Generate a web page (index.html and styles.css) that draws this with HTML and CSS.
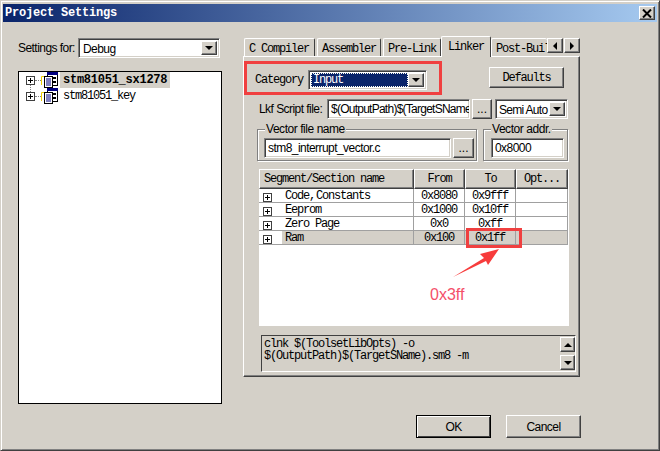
FILE: index.html
```
<!DOCTYPE html>
<html lang="en">
<head>
<meta charset="utf-8">
<title>Project Settings</title>
<link rel="stylesheet" href="styles.css">
</head>
<body>
<div class="window">
  <div class="titlebar">
    <span class="title">Project Settings</span>
    <span class="close raised"><svg width="10" height="9" viewBox="0 0 10 9"><path d="M1 0.5 L9 8.5 M9 0.5 L1 8.5" stroke="#000" stroke-width="2" fill="none"/></svg></span>
  </div>
  <div class="content">
    <div class="left">
      <div class="settings-row">
        <span class="label settings-label">Settings for:</span>
        <div class="combo settings-combo"><span class="combo-text">Debug</span><span class="arrow raised"><i class="tri"></i></span></div>
      </div>
      <div class="tree">
        <div class="tree-row">
          <span class="plus"></span><span class="dots"></span>
          <svg class="proj" width="17" height="16" viewBox="0 0 17 16"><rect x="6.5" y="0.5" width="10" height="13" fill="#fff" stroke="#000"/><rect x="6" y="0" width="11" height="3" fill="#000080"/><rect x="12" y="5" width="3" height="2" fill="#000"/><rect x="12" y="9" width="3" height="2" fill="#000"/><path d="M0.5 13V4.5H6" fill="none" stroke="#f0d000"/><rect x="3.5" y="4.5" width="8" height="11" fill="#fff" stroke="#000"/><path d="M5 7h5M5 9h5M5 11h5M5 13h5" stroke="#000080"/></svg>
          <span class="tree-text bold selected">stm81051_sx1278</span>
        </div>
        <div class="tree-row">
          <span class="plus"></span><span class="dots"></span>
          <svg class="proj" width="17" height="16" viewBox="0 0 17 16"><rect x="6.5" y="0.5" width="10" height="13" fill="#fff" stroke="#000"/><rect x="6" y="0" width="11" height="3" fill="#000080"/><rect x="12" y="5" width="3" height="2" fill="#000"/><rect x="12" y="9" width="3" height="2" fill="#000"/><path d="M0.5 13V4.5H6" fill="none" stroke="#f0d000"/><rect x="3.5" y="4.5" width="8" height="11" fill="#fff" stroke="#000"/><path d="M5 7h5M5 9h5M5 11h5M5 13h5" stroke="#000080"/></svg>
          <span class="tree-text">stm81051_key</span>
        </div>
      </div>
    </div>
    <div class="right">
      <div class="tabstrip">
        <span class="tab t1">C Compiler</span>
        <span class="tab t2">Assembler</span>
        <span class="tab t3">Pre-Link</span>
        <span class="tab active">Linker</span>
        <span class="tab t5">Post-Buil</span>
        <span class="spin raised"><i class="tri-left"></i></span>
        <span class="spin raised"><i class="tri-right"></i></span>
      </div>
      <div class="panel">
        <div class="category-row">
          <div class="category">
            <span class="mono-label">Category</span>
            <div class="combo cat-combo"><span class="combo-text sel">Input</span><span class="arrow raised"><i class="tri"></i></span></div>
          </div>
          <button class="btn defaults">Defaults</button>
        </div>
        <div class="lkf-row">
          <span class="label">Lkf Script file:</span>
          <div class="field lkf-field">$(OutputPath)$(TargetSName</div>
          <button class="btn dots-btn">...</button>
          <div class="combo semi-combo"><span class="combo-text">Semi Auto</span><span class="arrow raised"><i class="tri"></i></span></div>
        </div>
        <div class="groups">
          <div class="group g-file">
            <span class="legend">Vector file name</span>
            <div class="group-body">
              <div class="field file-field">stm8_interrupt_vector.c</div>
              <button class="btn dots-btn v">...</button>
            </div>
          </div>
          <div class="group g-addr">
            <span class="legend">Vector addr.</span>
            <div class="group-body">
              <div class="field addr-field">0x8000</div>
            </div>
          </div>
        </div>
        <div class="table">
          <div class="thead">
            <span class="th c1">Segment/Section name</span>
            <span class="th c2">From</span>
            <span class="th c3">To</span>
            <span class="th c4">Opt...</span>
          </div>
          <div class="tr"><span class="td c1"><span class="plus sm"></span><span class="code">Code, Constants</span></span><span class="td c2">0x8080</span><span class="td c3">0x9fff</span><span class="td c4"></span></div>
          <div class="tr"><span class="td c1"><span class="plus sm"></span>Eeprom</span><span class="td c2">0x1000</span><span class="td c3">0x10ff</span><span class="td c4"></span></div>
          <div class="tr"><span class="td c1"><span class="plus sm"></span>Zero Page</span><span class="td c2">0x0</span><span class="td c3">0xff</span><span class="td c4"></span></div>
          <div class="tr on"><span class="td c1"><span class="plus sm"></span>Ram</span><span class="td c2">0x100</span><span class="td c3">0x1ff</span><span class="td c4"></span></div>
          <span class="red-cell"></span>
          <svg class="red-arrow" width="50" height="34" viewBox="0 0 50 34"><path d="M3 30 L34 11 L30 7 L49 2 L38 18 L36 14 Z" fill="#f73c3c"/></svg>
          <span class="annot">0x3ff</span>
        </div>
        <div class="output">
          <div class="out-text">clnk $(ToolsetLibOpts) -o<br>$(OutputPath)$(TargetSName).sm8 -m</div>
          <div class="out-scroll">
            <span class="spin raised"><i class="tri-up"></i></span>
            <span class="spin raised"><i class="tri"></i></span>
          </div>
        </div>
      </div>
    </div>
  </div>
  <div class="footer">
    <button class="btn ok">OK</button>
    <button class="btn cancel">Cancel</button>
  </div>
</div>
</body>
</html>
```
FILE: styles.css
```
* { box-sizing: border-box; }
html, body { margin: 0; padding: 0; }
body { width: 660px; height: 451px; overflow: hidden; background: #d4d0c8; font-family: "Liberation Sans", Arial, sans-serif; }
.window { width: 660px; height: 451px; background: #d4d0c8; border: 1px solid; border-color: #d4d0c8 #404040 #404040 #d4d0c8; box-shadow: inset 1px 1px 0 #fff, inset -1px -1px 0 #808080; padding: 3px 2px 2px; }
.titlebar { height: 18px; background: linear-gradient(90deg, #0a246a, #a6caf0); display: flex; align-items: center; justify-content: space-between; padding: 0 2px; }
.title { color: #fff; font: bold 12px/18px "Liberation Mono", monospace; letter-spacing: -0.2px; }
.raised { background: #d4d0c8; border: 1px solid; border-color: #fff #404040 #404040 #fff; box-shadow: inset -1px -1px 0 #808080; }
.close { width: 16px; height: 14px; display: flex; align-items: center; justify-content: center; }
.content { display: flex; padding: 14px 0 0 14px; height: 356px; }
.left { width: 226px; flex: none; }
.label { font-size: 12px; line-height: 14px; color: #000; letter-spacing: -0.55px; white-space: nowrap; }
.settings-row { display: flex; align-items: center; height: 20px; margin: 2px 0 0 1px; }
.settings-label { width: 60px; flex: none; padding-top: 1px; line-height: 15px; }
.combo { background: #fff; display: flex; align-items: center; justify-content: space-between; border: 1px solid; border-color: #808080 #fff #fff #808080; box-shadow: inset 1px 1px 0 #404040, inset -1px -1px 0 #d4d0c8; padding: 2px; }
.combo-text { font-size: 12px; line-height: 14px; letter-spacing: -0.55px; padding: 1px 0 0 2px; white-space: nowrap; }
.arrow { width: 16px; height: 100%; flex: none; display: flex; align-items: center; justify-content: center; }
.tri { display: block; width: 0; height: 0; border: 4px solid transparent; border-top-color: #000; border-bottom: 0; }
.tri-up { display: block; width: 0; height: 0; border: 4px solid transparent; border-bottom-color: #000; border-top: 0; }
.tri-left { display: block; width: 0; height: 0; border: 4px solid transparent; border-right-color: #000; border-left: 0; }
.tri-right { display: block; width: 0; height: 0; border: 4px solid transparent; border-left-color: #000; border-right: 0; }
.settings-combo { width: 142px; height: 20px; }
.tree { width: 204px; height: 333px; margin: 13px 0 0 1px; background: #fff; border: 1px solid #000; position: relative; }
.tree::before { content: ""; position: absolute; left: 11px; top: 13px; height: 7px; border-left: 1px dotted #808080; }
.tree-row { display: flex; align-items: center; height: 16px; padding-left: 7px; }
.plus { display: inline-block; flex: none; width: 9px; height: 9px; border: 1px solid #404040; background: linear-gradient(#000, #000) center / 5px 1px no-repeat, linear-gradient(#000, #000) center / 1px 5px no-repeat, #fff; }
.dots { width: 6px; height: 1px; flex: none; border-top: 1px dotted #808080; }
.proj { flex: none; }
.tree-text { font: 12px/15px "Liberation Mono", monospace; letter-spacing: -1.2px; margin-left: 2px; padding: 1px 3px 0; color: #000; }
.tree-text.bold { font-weight: bold; letter-spacing: -0.25px; }
.selected { background: #d4d0c8; }
.right { width: 338px; flex: none; }
.tabstrip { display: flex; align-items: flex-end; height: 20px; padding-left: 1px; }
.tab { font: 12px/16px "Liberation Mono", monospace; letter-spacing: -1.2px; height: 18px; padding: 2px 0 0 4px; background: #d4d0c8; border: 1px solid; border-color: #fff #404040 #d4d0c8 #fff; border-bottom: 0; border-radius: 2px 2px 0 0; white-space: nowrap; overflow: hidden; flex: none; }
.t1 { width: 71px; margin-right: 2px; }
.t2 { width: 64px; margin-right: 2px; }
.t3 { width: 58px; }
.tab.active { height: 21px; width: 50px; padding: 2px 0 0 6px; margin-bottom: -1px; position: relative; z-index: 1; }
.t5 { width: 56px; border-right: 0; }
.spin { width: 16px; height: 15px; flex: none; display: flex; align-items: center; justify-content: center; }
.tabstrip .spin { margin: 0 1px 3px 0; }
.panel { width: 337px; height: 321px; background: #d4d0c8; border: 1px solid; border-color: #fff #404040 #404040 #fff; box-shadow: inset -1px -1px 0 #808080; padding: 4px 0 0; }
.category-row { display: flex; align-items: flex-start; }
.category { width: 198px; height: 34px; border: 3px solid #f04040; display: flex; align-items: flex-start; padding: 6px 0 0 8px; flex: none; }
.mono-label { font: 12px/20px "Liberation Mono", monospace; letter-spacing: -1.2px; width: 53px; flex: none; white-space: nowrap; }
.cat-combo { width: 119px; height: 20px; }
.combo-text.sel { background: #0a246a; color: #fff; flex: 1; font: 12px/15px "Liberation Mono", monospace; letter-spacing: -1.2px; outline: 1px dotted #ffe; outline-offset: -1px; padding: 0 0 0 2px; height: 14px; }
.btn { background: #d4d0c8; border: 1px solid; border-color: #fff #404040 #404040 #fff; box-shadow: inset -1px -1px 0 #808080; padding: 0; color: #000; font-family: "Liberation Sans", Arial, sans-serif; }
.defaults { width: 75px; height: 21px; margin: 6px 0 0 47px; font: 12px/16px "Liberation Mono", monospace; letter-spacing: -1.2px; }
.lkf-row { display: flex; align-items: center; height: 20px; margin: 4px 0 0 15px; }
.lkf-row .label { width: 68px; flex: none; }
.field { background: #fff; border: 1px solid; border-color: #808080 #fff #fff #808080; box-shadow: inset 1px 1px 0 #404040, inset -1px -1px 0 #d4d0c8; height: 20px; font-size: 12px; letter-spacing: -0.55px; line-height: 18px; padding: 0 2px 0 3px; white-space: nowrap; overflow: hidden; flex: none; }
.lkf-field { width: 143px; letter-spacing: -0.75px; }
.dots-btn { width: 20px; height: 20px; margin-left: 2px; font-size: 12px; line-height: 12px; flex: none; }
.semi-combo { width: 73px; height: 20px; margin-left: 3px; }
.semi-combo .combo-text { padding-left: 1px; letter-spacing: -0.7px; }
.groups { display: flex; margin: 10px 0 0 13px; }
.group { height: 32px; border: 1px solid #808080; box-shadow: inset 1px 1px 0 #fff, 1px 1px 0 #fff; position: relative; flex: none; }
.g-file { width: 220px; }
.g-addr { width: 85px; margin-left: 6px; }
.legend { position: absolute; left: 7px; top: -7px; background: #d4d0c8; padding: 0 1px; font-size: 12px; line-height: 13px; letter-spacing: -0.45px; white-space: nowrap; }
.group-body { display: flex; padding: 8px 0 0 6px; }
.file-field { width: 187px; }
.dots-btn.v { width: 21px; }
.addr-field { width: 73px; margin-left: 1px; }
.table { width: 310px; height: 158px; margin: 7px 0 0 15px; background: #fff; position: relative; border-top: 1px solid #d4d0c8; }
.thead { display: flex; height: 20px; }
.th { height: 20px; background: #d4d0c8; border: 1px solid; border-color: #fff #404040 #404040 #fff; box-shadow: inset -1px -1px 0 #808080; font: 12px/18px "Liberation Mono", monospace; letter-spacing: -1.2px; text-align: center; flex: none; white-space: nowrap; }
.th.c1 { text-align: left; padding-left: 4px; }
.c1 { width: 155px; }
.c2 { width: 51px; }
.c3 { width: 51px; }
.c4 { width: 52px; }
.tr { display: flex; height: 14px; border-bottom: 1px solid #a0a0a0; width: 309px; }
.td { font: 12px/14px "Liberation Mono", monospace; letter-spacing: -1.2px; text-align: center; border-right: 1px solid #a0a0a0; flex: none; height: 13px; white-space: nowrap; color: #000; }
.td.c1 { text-align: left; display: flex; align-items: flex-start; padding-left: 4px; }
.td .sm { margin: 4px 13px 0 0; }
.code { word-spacing: -5px; }
.tr.on { background: #d4d0c8; }
.tr.on .td.c1 { background: linear-gradient(90deg, #fff 23px, #d4d0c8 23px); }
.red-cell { position: absolute; left: 207px; top: 59px; width: 56px; height: 20px; border: 3px solid #f04040; }
.red-arrow { position: absolute; left: 191px; top: 78px; }
.annot { position: absolute; left: 171px; top: 116px; color: #f4506a; font-size: 16px; line-height: 20px; }
.output { width: 315px; height: 37px; margin: 9px 0 0 17px; display: flex; border: 1px solid; border-color: #404040 #fff #fff #404040; }
.out-text { flex: 1; font: 12px/12px "Liberation Mono", monospace; letter-spacing: -1.2px; padding: 2px 0 0 2px; white-space: nowrap; }
.out-scroll { width: 15px; display: flex; flex-direction: column; justify-content: space-between; padding: 1px 0; }
.out-scroll .spin { width: 15px; }
.footer { display: flex; gap: 15px; padding: 37px 0 0 413px; }
.ok { width: 75px; height: 23px; border: 1px solid #000; box-shadow: inset 1px 1px 0 #fff, inset -1px -1px 0 #404040; font-size: 12px; letter-spacing: -0.55px; }
.cancel { width: 75px; height: 23px; font-size: 12px; letter-spacing: -0.55px; }
```
